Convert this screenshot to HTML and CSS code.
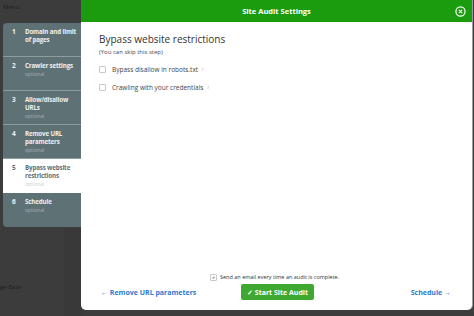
FILE: index.html
```html
<!DOCTYPE html>
<html lang="en">
<head>
    <meta charset="UTF-8">
    <title>Site Audit Settings</title>
    <link rel="stylesheet" href="styles.css">
</head>
<body>
    <div class="backdrop">
        <div class="bg-menu">Menu</div>
        <div class="bg-col"></div>
        <div class="bg-base">ge Base</div>
    </div>

    <div class="dialog">
        <ul class="steps">
            <li class="step">
                <span class="num">1</span>
                <div class="step-text"><b>Domain and limit<br>of pages</b></div>
            </li>
            <li class="step">
                <span class="num">2</span>
                <div class="step-text"><b>Crawler settings</b><small>optional</small></div>
            </li>
            <li class="step">
                <span class="num">3</span>
                <div class="step-text"><b>Allow/disallow<br>URLs</b><small>optional</small></div>
            </li>
            <li class="step">
                <span class="num">4</span>
                <div class="step-text"><b>Remove URL<br>parameters</b><small>optional</small></div>
            </li>
            <li class="step active">
                <span class="num">5</span>
                <div class="step-text"><b>Bypass website<br>restrictions</b><small>optional</small></div>
            </li>
            <li class="step last">
                <span class="num">6</span>
                <div class="step-text"><b>Schedule</b><small>optional</small></div>
            </li>
        </ul>

        <div class="modal">
            <div class="modal-head">
                <span>Site Audit Settings</span>
                <svg class="close" width="11" height="11" viewBox="0 0 12 12">
                    <circle cx="6" cy="6" r="5" fill="none" stroke="#fff" stroke-width="1.3"/>
                    <path d="M4.2 4.2 L7.8 7.8 M7.8 4.2 L4.2 7.8" stroke="#fff" stroke-width="1.2"/>
                </svg>
            </div>

            <div class="modal-body">
                <h2>Bypass website restrictions</h2>
                <p class="hint">(You can skip this step)</p>

                <label class="option"><span class="box"></span>Bypass disallow in robots.txt <i>i</i></label>
                <label class="option"><span class="box"></span>Crawling with your credentials <i>i</i></label>
            </div>

            <div class="modal-foot">
                <label class="notify"><span class="box checked">&#10004;</span>Send an email every time an audit is complete.</label>
                <div class="nav">
                    <a class="link">&larr; Remove URL parameters</a>
                    <button class="start">&#10003; Start Site Audit</button>
                    <a class="link">Schedule &rarr;</a>
                </div>
            </div>
        </div>
    </div>
</body>
</html>
```

FILE: styles.css
```css
body {
    margin: 0;
    width: 474px;
    height: 316px;
    overflow: hidden;
    background-color: #3c3c3c;
    font-family: "Open Sans", "Noto Sans", sans-serif;
}
.backdrop {
    height: 316px;
    position: relative;
}
.bg-menu {
    padding: 3px 0 0 3px;
    font-size: 6px;
    color: #1e1e1e;
}
.bg-col {
    position: absolute;
    left: 64px;
    top: 228px;
    width: 18px;
    height: 88px;
    background-color: #393939;
}
.bg-base {
    position: absolute;
    left: 0;
    top: 283px;
    font-size: 6px;
    color: #1e1e1e;
}

/* dialog over the page */
.dialog {
    position: absolute;
    left: 3px;
    top: 0;
    display: flex;
    align-items: flex-start;
}
.steps {
    list-style: none;
    margin: 23px 0 0 0;
    padding: 0;
    width: 78px;
    background-color: #5e7175;
    border-radius: 4px 0 0 4px;
    overflow: hidden;
}
.step {
    display: flex;
    height: 34px;
    box-sizing: border-box;
    padding-top: 5px;
    border-bottom: 1px solid #8c9c9f;
    color: #eef2f3;
}
.step.last {
    border-bottom: none;
}
.num {
    width: 22px;
    padding-left: 9px;
    box-sizing: border-box;
    font-size: 6.5px;
    line-height: 8px;
    font-weight: bold;
}
.step-text {
    display: flex;
    flex-direction: column;
    width: 56px;
    white-space: nowrap;
}
.step-text b {
    font-size: 6.2px;
    line-height: 8px;
    letter-spacing: -0.15px;
}
.step-text small {
    margin-top: 1px;
    font-size: 5px;
    line-height: 7px;
    color: #a3b2b5;
}
.step.active {
    background-color: #fff;
    color: #5e7175;
    border-bottom: none;
}
.step.active small {
    color: #c9cfd0;
}

.modal {
    width: 391px;
    height: 310px;
    background-color: #fff;
    border-radius: 0 0 5px 5px;
    display: flex;
    flex-direction: column;
    box-shadow: 1px 0 0 #9a9a9a;
}
.modal-head {
    height: 22px;
    background-color: #1b9c0e;
    color: #fff;
    font-size: 7.5px;
    font-weight: bold;
    display: flex;
    align-items: center;
    justify-content: center;
    position: relative;
}
.close {
    position: absolute;
    right: 6px;
    top: 6px;
}
.modal-body {
    flex: 1;
    padding: 10px 18px 0;
    color: #333;
}
h2 {
    margin: 0;
    font-size: 10px;
    font-weight: normal;
    color: #333;
}
.hint {
    margin: 2px 0 4px;
    font-size: 6px;
    color: #444;
}
.option {
    display: flex;
    align-items: center;
    height: 18px;
    font-size: 6.5px;
    color: #444;
}
.box {
    width: 5px;
    height: 5px;
    border: 1px solid #c8c8c8;
    border-radius: 1px;
    margin-right: 6px;
    font-size: 4px;
    line-height: 5px;
    text-align: center;
    color: #555;
}
.option i {
    margin-left: 4px;
    font-size: 5px;
    color: #aaa;
}
.modal-foot {
    padding-bottom: 10px;
}
.notify {
    display: flex;
    align-items: center;
    margin-left: 129px;
    font-size: 5.5px;
    color: #333;
}
.notify .box {
    margin-right: 3px;
}
.nav {
    display: flex;
    align-items: center;
    justify-content: space-between;
    padding: 0 21px 0 20px;
    margin-top: 3px;
}
.link {
    color: #2b7bd1;
    font-size: 7px;
    font-weight: bold;
}
.start {
    margin-left: 34px;
    margin-right: 86px;
    height: 16px;
    padding: 0 6px;
    background-color: #3fa831;
    color: #fff;
    font-family: inherit;
    font-size: 7px;
    font-weight: bold;
    border: none;
    border-radius: 2px;
}
```
